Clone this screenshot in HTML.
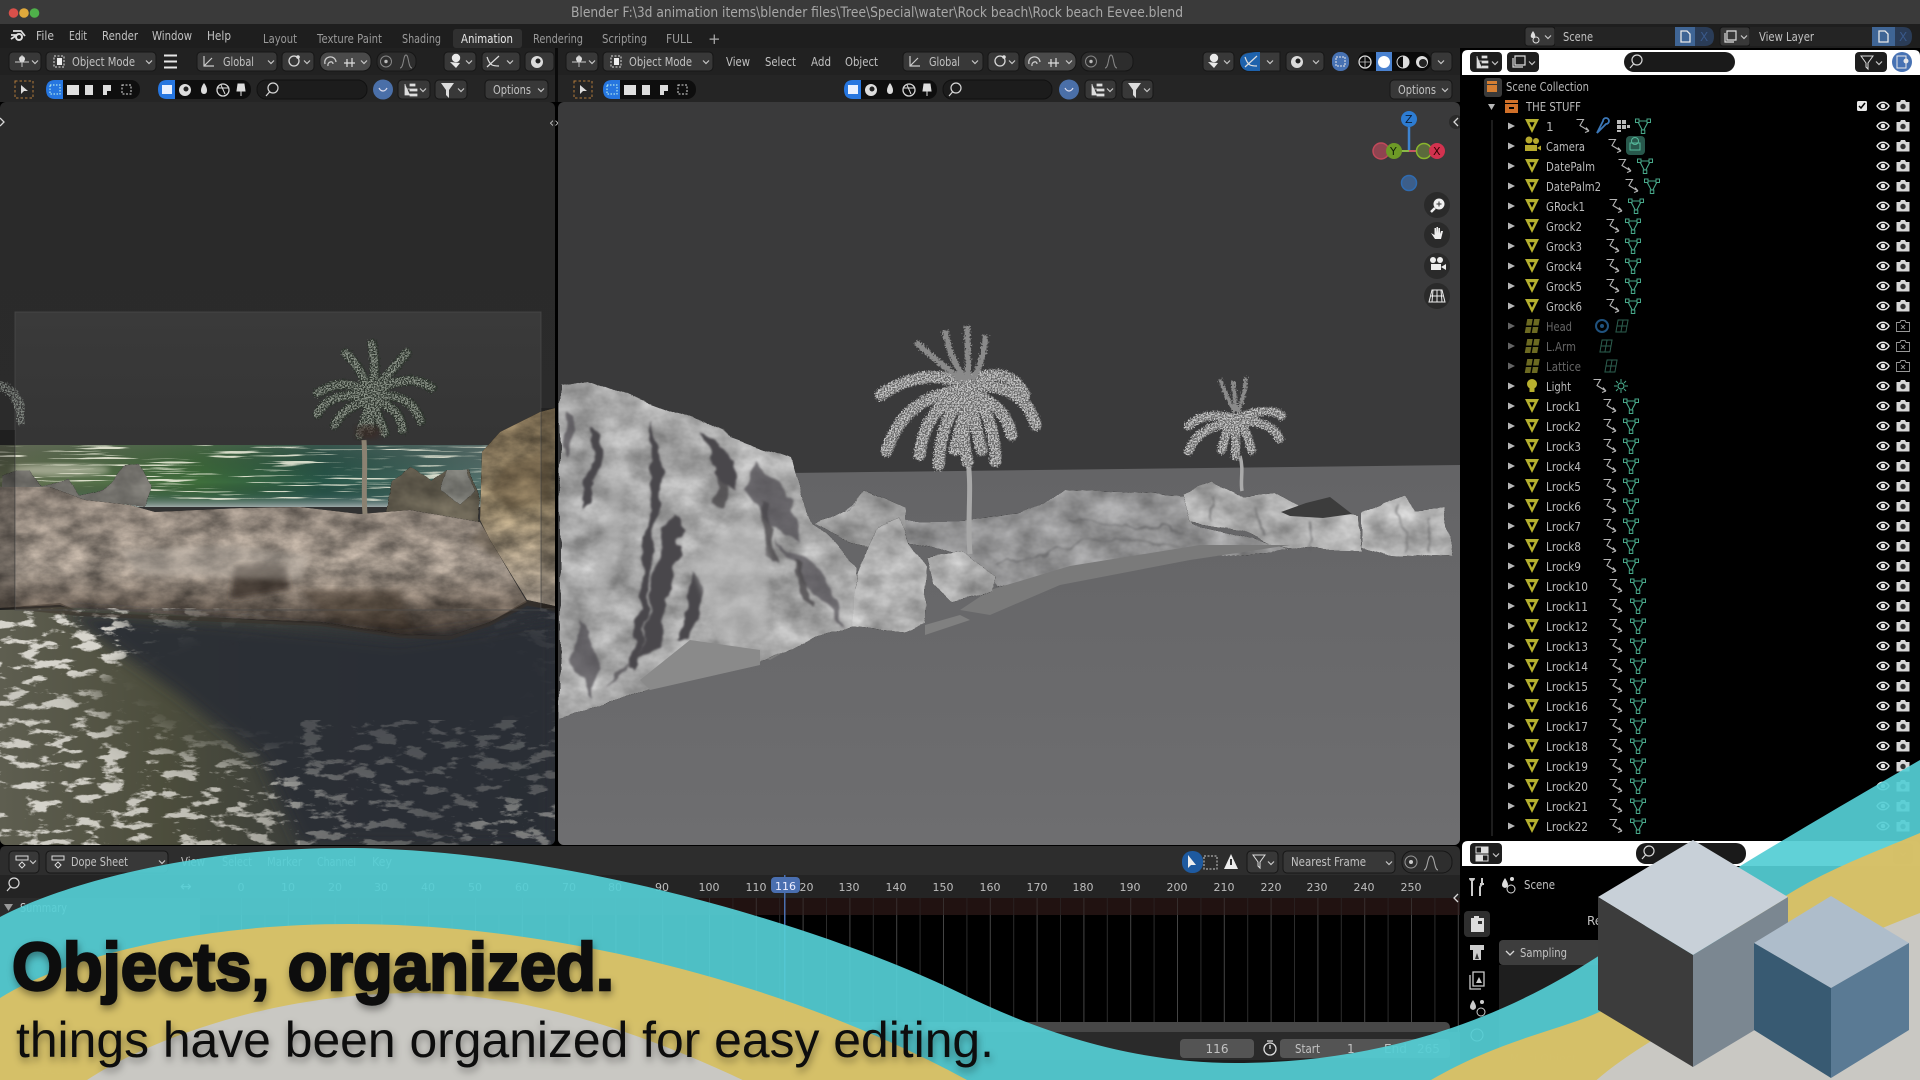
<!DOCTYPE html>
<html><head><meta charset="utf-8"><title>Blender</title>
<style>
html,body{margin:0;padding:0;background:#000;width:1920px;height:1080px;overflow:hidden}
svg{display:block;font-family:"DejaVu Sans","Liberation Sans",sans-serif}
text{font-size:12px;fill:#c2c2c2}
.b{fill:#383838;stroke:#161616;stroke-width:1}
.d{fill:#2c2c2c;stroke:#161616;stroke-width:1}
.r{fill:#bcbcbc;font-size:12px}
.g{fill:#666;font-size:12px}
.i{fill:none;stroke:#d8d8d8;stroke-width:1.3}
.f{font-size:11px;text-anchor:middle;fill:#bebebe}
.lib{font-family:"Liberation Sans",sans-serif}
</style></head><body>
<svg width="1920" height="1080" viewBox="0 0 1920 1080" xmlns="http://www.w3.org/2000/svg">
<defs>
<symbol id="m" overflow="visible"><path d="M-7,-7H7L0,7ZM-2.6,-3.8L0,1.6L2.6,-3.8Z" fill="#b6b12f" fill-rule="evenodd"/></symbol>
<symbol id="a" overflow="visible"><path d="M-4,-3.5L3,0L-4,3.5Z" fill="#b8b8b8"/></symbol>
<symbol id="l" overflow="visible"><path d="M-6.5,-6.5H0.5L-3,-0.5L6,5M6,5L3,1.5M6,5L2,6.5" fill="none" stroke="#b5b5b5" stroke-width="1.1"/></symbol>
<symbol id="d" overflow="visible"><path d="M-5.5,-5L5.5,-5L0,5.5Z" fill="none" stroke="#48a88a" stroke-width="1.1"/><g fill="#000" stroke="#48a88a" stroke-width="1"><rect x="-7.5" y="-7" width="3.5" height="3.5"/><rect x="4" y="-7" width="3.5" height="3.5"/><rect x="-1.7" y="4" width="3.5" height="3.5"/></g></symbol>
<symbol id="e" overflow="visible"><path d="M-6,0C-3,-5 3,-5 6,0C3,5 -3,5 -6,0Z" fill="none" stroke="#e8e8e8" stroke-width="1.4"/><circle r="2.3" fill="#e8e8e8"/></symbol>
<symbol id="c" overflow="visible"><path d="M-6.5,-4H-3L-2,-6H2L3,-4H6.5V5.5H-6.5Z" fill="#d8d8d8"/><circle r="2.7" cy="0.5" fill="#333"/></symbol>
<symbol id="x" overflow="visible"><path d="M-6.5,-3.5H-3L-2,-5.5H2L3,-3.5H6.5V5.5H-6.5Z" fill="none" stroke="#999" stroke-width=".9"/><path d="M-2,-1L2,3M2,-1L-2,3" stroke="#999" stroke-width=".9"/></symbol>
<symbol id="h" overflow="visible"><path d="M-3,-1.5L0,1.5L3,-1.5" fill="none" stroke="#c8c8c8" stroke-width="1.2"/></symbol>
<symbol id="t" overflow="visible"><g fill="#6c6a22" transform="skewX(-10)"><rect x="-6" y="-7" width="5.5" height="6.5"/><rect x="1" y="-7" width="5.5" height="6.5"/><rect x="-6" y="1" width="5.5" height="6"/><rect x="1" y="1" width="5.5" height="6"/></g></symbol>
<symbol id="u" overflow="visible"><g fill="none" stroke="#2d5f50" stroke-width="1" transform="skewX(-10)"><rect x="-5" y="-6" width="10" height="12"/><path d="M-5,0H5M0,-6V6"/></g></symbol>
<symbol id="p" overflow="visible"><circle cx="1" cy="-1" r="5" fill="none" stroke="#d8d8d8" stroke-width="1.2"/><path d="M-6,7L-2.500,3" stroke="#d8d8d8" stroke-width="1.200"/></symbol>
<symbol id="oc" overflow="visible"><circle r="6" fill="#ddd"/><circle r="2.5" fill="#222" cx="1" cy="-1"/></symbol>
<pattern id="vl" x="241" y="0" width="46.8" height="10" patternUnits="userSpaceOnUse"><rect width="1" height="10" fill="#444"/><rect x="23.4" width="1" height="10" fill="#2c2c2c"/></pattern>
<filter id="rock" x="0" y="0" width="100%" height="100%" color-interpolation-filters="sRGB"><feTurbulence type="fractalNoise" baseFrequency=".035 .06" numOctaves="5" seed="8"/><feColorMatrix values=".5 0 0 0 .25 .5 0 0 0 .25 .5 0 0 0 .25 0 0 0 0 1" result="g"/><feComposite in="SourceGraphic" in2="g" operator="arithmetic" k1="2" k2="0" k3="0" k4="0"/></filter>
<filter id="rock2" x="-8%" y="-8%" width="116%" height="116%" color-interpolation-filters="sRGB"><feTurbulence type="fractalNoise" baseFrequency=".02 .03" numOctaves="3" seed="3" result="w"/><feDisplacementMap in="SourceGraphic" in2="w" scale="10" xChannelSelector="R" yChannelSelector="G" result="s"/><feTurbulence type="fractalNoise" baseFrequency=".03 .04" numOctaves="4" seed="6"/><feColorMatrix values=".35 0 0 0 .33 .35 0 0 0 .33 .35 0 0 0 .33 0 0 0 0 1" result="g"/><feComposite in="s" in2="g" operator="arithmetic" k1="2" k2="0" k3="0" k4="0"/></filter>
<filter id="wob" x="-15%" y="-15%" width="130%" height="130%"><feTurbulence type="fractalNoise" baseFrequency=".04" numOctaves="3" seed="9" result="w"/><feDisplacementMap in="SourceGraphic" in2="w" scale="18" xChannelSelector="R" yChannelSelector="G" result="s"/><feGaussianBlur in="s" stdDeviation="1"/></filter>
<filter id="foam" x="0" y="0" width="100%" height="100%" color-interpolation-filters="sRGB"><feTurbulence type="fractalNoise" baseFrequency=".04 .1" numOctaves="5" seed="11"/><feColorMatrix values="0 0 0 0 .84 0 0 0 0 .83 0 0 0 0 .8 9 0 0 0 -4.9"/></filter>
<filter id="spark" x="0" y="0" width="100%" height="100%" color-interpolation-filters="sRGB"><feTurbulence type="fractalNoise" baseFrequency=".015 .45" numOctaves="3" seed="5"/><feColorMatrix values="0 0 0 0 .95 0 0 0 0 .95 0 0 0 0 .88 9 0 0 0 -5.4"/></filter>
<filter id="spk" x="-10%" y="-10%" width="120%" height="120%" color-interpolation-filters="sRGB"><feTurbulence type="fractalNoise" baseFrequency=".7" numOctaves="2" seed="2" result="n0"/><feDisplacementMap in="SourceGraphic" in2="n0" scale="7" xChannelSelector="R" yChannelSelector="G" result="s"/><feColorMatrix in="n0" values="0 0 0 0 0 0 0 0 0 0 0 0 0 0 0 7 0 0 0 -3" result="n"/><feComposite in="s" in2="n" operator="in"/></filter>
<filter id="fuzz" x="-10%" y="-10%" width="120%" height="120%" color-interpolation-filters="sRGB"><feTurbulence type="fractalNoise" baseFrequency=".6" numOctaves="2" seed="4"/><feDisplacementMap in="SourceGraphic" scale="7" xChannelSelector="R" yChannelSelector="G"/></filter>
<filter id="bl"><feGaussianBlur stdDeviation="7"/></filter>
<filter id="bl2"><feGaussianBlur stdDeviation="3"/></filter>
<filter id="bl3"><feGaussianBlur stdDeviation="18"/></filter>
<filter id="sh" x="-5%" y="-20%" width="110%" height="150%"><feDropShadow dx="1" dy="4" stdDeviation="4" flood-color="#000" flood-opacity=".4"/></filter>
<linearGradient id="sky" x1="0" y1="0" x2="0" y2="1"><stop offset="0" stop-color="#3a3a3a"/><stop offset="1" stop-color="#2e2e2e"/></linearGradient>
<linearGradient id="vsky" x1="0" y1="0" x2="0" y2="1"><stop offset="0" stop-color="#2a2a2a"/><stop offset="1" stop-color="#2c2c2c"/></linearGradient>
<linearGradient id="sea" x1="0" y1="0" x2="1" y2="0"><stop offset="0" stop-color="#6b7457"/><stop offset=".4" stop-color="#3f6f3c"/><stop offset=".65" stop-color="#28574a"/><stop offset="1" stop-color="#5a7672"/></linearGradient>
<linearGradient id="seaV" x1="0" y1="0" x2="0" y2="1"><stop offset="0" stop-color="#555" stop-opacity=".35"/><stop offset=".6" stop-color="#000" stop-opacity="0"/><stop offset=".8" stop-color="#2b4a4a" stop-opacity=".3"/><stop offset="1" stop-color="#a2acac" stop-opacity=".95"/></linearGradient>
<linearGradient id="wat" x1="0" y1="0" x2="1" y2="0"><stop offset="0" stop-color="#5e5e50"/><stop offset=".3" stop-color="#4c4d3c"/><stop offset=".6" stop-color="#383b3a"/><stop offset="1" stop-color="#2c2f36"/></linearGradient>
<linearGradient id="rk" x1="0" y1="0" x2="0" y2="1"><stop offset="0" stop-color="#8d8278"/><stop offset=".55" stop-color="#9a8f84"/><stop offset=".8" stop-color="#6b6056"/><stop offset="1" stop-color="#332b25"/></linearGradient>
<linearGradient id="ck" x1="0" y1="0" x2="0" y2="1"><stop offset="0" stop-color="#7a6a50"/><stop offset=".5" stop-color="#8c7d62"/><stop offset="1" stop-color="#a89c8e"/></linearGradient>
<radialGradient id="fm" gradientUnits="userSpaceOnUse" cx="30" cy="810" r="400"><stop offset="0" stop-color="#fff"/><stop offset=".5" stop-color="#ccc"/><stop offset="1" stop-color="#222"/></radialGradient>
<mask id="fmask" maskUnits="userSpaceOnUse" x="0" y="600" width="555" height="245"><rect x="0" y="600" width="555" height="245" fill="url(#fm)"/><ellipse cx="330" cy="680" rx="240" ry="85" fill="#000" filter="url(#bl3)"/><ellipse cx="40" cy="645" rx="95" ry="36" fill="#fff" filter="url(#bl)"/><ellipse cx="520" cy="825" rx="60" ry="26" fill="#aaa" filter="url(#bl)"/><rect x="300" y="720" width="255" height="125" fill="#555" opacity=".6"/></mask>
<linearGradient id="grnd" x1="0" y1="0" x2="0" y2="1"><stop offset="0" stop-color="#646466"/><stop offset="1" stop-color="#6e6e70"/></linearGradient>
<clipPath id="lv"><rect x="0" y="102" width="555" height="743" rx="6"/></clipPath>
<clipPath id="rv"><rect x="558" y="102" width="902" height="743" rx="6"/></clipPath>
<g id="pf" fill="none" stroke-linecap="round">
<path d="M371,395Q345,375 318,393"/><path d="M371,397Q330,390 318,414"/><path d="M371,395Q408,370 432,388"/><path d="M371,397Q410,390 421,421"/><path d="M371,395Q360,365 346,353"/><path d="M371,395Q378,365 372,344"/><path d="M371,395Q392,370 407,353"/><path d="M371,400Q345,405 335,425"/><path d="M371,400Q400,405 403,430"/><path d="M371,400L360,435"/><path d="M372,400L385,433"/><path d="M371,400L371,430"/>
</g>
<g id="p1" fill="none" stroke-linecap="round">
<path d="M968,385Q925,365 881,395"/><path d="M965,390Q905,395 887,451"/><path d="M960,395Q925,410 920,455"/><path d="M958,400Q940,430 939,465"/><path d="M968,395Q960,430 968,462"/><path d="M975,395Q995,420 996,461"/><path d="M975,385Q1025,385 1036,425"/><path d="M972,380Q1010,365 1025,395"/><path d="M975,395Q1005,405 1012,435"/><path d="M968,400L955,450"/><path d="M970,400L982,450"/>
</g>
<g id="p2" fill="none" stroke-linecap="round">
<path d="M1236,419Q1205,410 1189,426"/><path d="M1236,422Q1200,425 1189,451"/><path d="M1236,419Q1270,405 1282,416"/><path d="M1236,421Q1272,420 1280,439"/><path d="M1236,420L1236,456"/><path d="M1230,420L1222,450"/><path d="M1242,420L1252,450"/>
</g>
</defs>

<rect width="1920" height="1080" fill="#000"/>
<rect width="1920" height="24" fill="#3a3a3a"/>
<circle cx="13.5" cy="13" r="4.8" fill="#d8504a"/><circle cx="24" cy="13" r="4.8" fill="#e0a93c"/><circle cx="34.5" cy="13" r="4.8" fill="#4fb04a"/>
<text x="571" y="17" style="font-size:14px;fill:#a8a8a8" textLength="612" lengthAdjust="spacingAndGlyphs">Blender F:\3d animation items\blender files\Tree\Special\water\Rock beach\Rock beach Eevee.blend</text>
<rect y="24" width="1920" height="24" fill="#1e1e1e"/>

<g transform="translate(18,36)"><circle cx="1" cy="1" r="3" fill="none" stroke="#ddd" stroke-width="2"/><path d="M-7,-1H-1L-7,3M-5,-5L3,-5L7,0" fill="none" stroke="#ddd" stroke-width="1.8"/></g>
<text x="36" y="40" textLength="18" lengthAdjust="spacingAndGlyphs">File</text>
<text x="69" y="40" textLength="18" lengthAdjust="spacingAndGlyphs">Edit</text>
<text x="102" y="40" textLength="36" lengthAdjust="spacingAndGlyphs">Render</text>
<text x="152" y="40" textLength="40" lengthAdjust="spacingAndGlyphs">Window</text>
<text x="207" y="40" textLength="24" lengthAdjust="spacingAndGlyphs">Help</text>
<rect x="453" y="29" width="69" height="19" rx="3" fill="#303030"/>
<text x="263" y="43" style="fill:#9a9a9a" textLength="34" lengthAdjust="spacingAndGlyphs">Layout</text>
<text x="317" y="43" style="fill:#9a9a9a" textLength="65" lengthAdjust="spacingAndGlyphs">Texture Paint</text>
<text x="402" y="43" style="fill:#9a9a9a" textLength="39" lengthAdjust="spacingAndGlyphs">Shading</text>
<text x="461" y="43" style="fill:#e8e8e8" textLength="52" lengthAdjust="spacingAndGlyphs">Animation</text>
<text x="533" y="43" style="fill:#9a9a9a" textLength="50" lengthAdjust="spacingAndGlyphs">Rendering</text>
<text x="602" y="43" style="fill:#9a9a9a" textLength="45" lengthAdjust="spacingAndGlyphs">Scripting</text>
<text x="666" y="43" style="fill:#9a9a9a" textLength="26" lengthAdjust="spacingAndGlyphs">FULL</text>
<text x="708" y="44" style="fill:#aaa;font-size:15px">+</text>

<rect x="1525" y="27" width="30" height="19" rx="3" class="b"/>
<path d="M1533,31c-3,4 -3,7 0,7c3,0 3,-3 0,-7z" fill="#ddd"/><circle cx="1536" cy="40" r="3" fill="none" stroke="#ddd"/>
<use href="#h" x="1548" y="37"/>
<rect x="1555" y="27" width="120" height="19" fill="#242424"/>
<text x="1563" y="41" textLength="30" lengthAdjust="spacingAndGlyphs">Scene</text>
<rect x="1675" y="27" width="20" height="19" fill="#3f6595"/>
<path d="M1681,31h6l3,3v8h-9z" fill="none" stroke="#e8e8e8" stroke-width="1.3"/>
<path d="M1695,27h10q9,0 9,9.5q0,9.5 -9,9.5h-10z" fill="#2a3c57"/>
<text x="1700" y="41" style="fill:#39598a">X</text>
<rect x="1720" y="27" width="30" height="19" rx="3" class="b"/>
<path d="M1727,31h9v9h-9zM1725,33v9h9" fill="none" stroke="#ddd" stroke-width="1.2"/>
<use href="#h" x="1744" y="37"/>
<rect x="1750" y="27" width="122" height="19" fill="#242424"/>
<text x="1759" y="41" textLength="55" lengthAdjust="spacingAndGlyphs">View Layer</text>
<rect x="1872" y="27" width="23" height="19" fill="#3f6595"/>
<path d="M1879,31h6l3,3v8h-9z" fill="none" stroke="#e8e8e8" stroke-width="1.3"/>
<path d="M1895,27h8q9,0 9,9.5q0,9.5 -9,9.5h-8z" fill="#2a3c57"/>
<text x="1899" y="41" style="fill:#39598a">X</text>

<rect y="48" width="1460" height="27" fill="#212121"/>
<rect y="75" width="1460" height="27" fill="#252525"/>
<rect x="555" y="48" width="3" height="54" fill="#0b0b0b"/>

<rect x="9" y="52" width="32" height="19" rx="4" class="b"/>
<circle cx="22" cy="59" r="3" fill="#ddd"/><path d="M15,62h14M22,55v12" stroke="#ccc" stroke-width=".9"/><use href="#h" x="35" y="62"/>
<rect x="46" y="52" width="110" height="19" rx="4" class="b"/>
<rect x="54" y="56" width="10" height="11" fill="none" stroke="#ddd" stroke-dasharray="2 1.5"/><rect x="57" y="58" width="5" height="7" fill="#eee"/>
<text x="72" y="66" textLength="63" lengthAdjust="spacingAndGlyphs">Object Mode</text><use href="#h" x="149" y="62"/>
<path d="M164,55.5h13M164,61.5h13M164,67.5h13" stroke="#e6e6e6" stroke-width="2"/>
<rect x="197" y="52" width="80" height="19" rx="4" class="b"/>
<path d="M204,56v10h10M204,66l8,-8" fill="none" stroke="#ccc" stroke-width="1.2"/>
<text x="223" y="66" textLength="31" lengthAdjust="spacingAndGlyphs">Global</text><use href="#h" x="271" y="62"/>
<rect x="282" y="52" width="32" height="19" rx="4" class="b"/>
<circle cx="294" cy="61" r="5" class="i"/><circle cx="298" cy="57" r="1.8" fill="#ddd"/><use href="#h" x="307" y="62"/>
<rect x="320" y="52" width="51" height="19" rx="8" fill="#4a4a4a" stroke="#161616"/>
<path d="M325,64c-2,-8 10,-10 11,-2M328,66c-1,-4 5,-6 5,-2" fill="none" stroke="#ccc" stroke-width="1.3"/>
<path d="M344,63h11M347,59v8M352,58v9" stroke="#ddd" stroke-width="1.2"/><use href="#h" x="364" y="62"/>
<rect x="377" y="52" width="39" height="19" rx="8" fill="#2d2d2d" stroke="#161616"/>
<circle cx="386" cy="61.5" r="5.5" fill="none" stroke="#888"/><circle cx="386" cy="61.5" r="1.7" fill="#bbb"/>
<path d="M400,68c4,0 3,-13 6,-13c3,0 2,13 6,13" fill="none" stroke="#888"/>
<rect x="444" y="52" width="32" height="19" rx="4" class="b"/><circle cx="456" cy="58" r="4.2" fill="#e8e8e8"/><path d="M450,62l6,6l4,-5z" fill="#e8e8e8"/><use href="#h" x="469" y="62"/>
<rect x="482" y="52" width="38" height="19" rx="4" class="b"/><path d="M487,67l12,-11M487,57c3,9 6,9 12,9" fill="none" stroke="#ddd" stroke-width="1.2"/><use href="#h" x="510" y="62"/>
<rect x="525" y="52" width="29" height="19" rx="4" class="b"/><use href="#oc" x="537" y="62"/>

<rect x="566" y="52" width="32" height="19" rx="4" class="b"/>
<circle cx="579" cy="59" r="3" fill="#ddd"/><path d="M572,62h14M579,55v12" stroke="#ccc" stroke-width=".9"/><use href="#h" x="592" y="62"/>
<rect x="603" y="52" width="110" height="19" rx="4" class="b"/>
<rect x="611" y="56" width="10" height="11" fill="none" stroke="#ddd" stroke-dasharray="2 1.5"/><rect x="614" y="58" width="5" height="7" fill="#eee"/>
<text x="629" y="66" textLength="63" lengthAdjust="spacingAndGlyphs">Object Mode</text><use href="#h" x="706" y="62"/>
<text x="726" y="66" textLength="24" lengthAdjust="spacingAndGlyphs">View</text>
<text x="765" y="66" textLength="31" lengthAdjust="spacingAndGlyphs">Select</text>
<text x="811" y="66" textLength="20" lengthAdjust="spacingAndGlyphs">Add</text>
<text x="845" y="66" textLength="33" lengthAdjust="spacingAndGlyphs">Object</text>
<rect x="903" y="52" width="80" height="19" rx="4" class="b"/>
<path d="M910,56v10h10M910,66l8,-8" fill="none" stroke="#ccc" stroke-width="1.2"/>
<text x="929" y="66" textLength="31" lengthAdjust="spacingAndGlyphs">Global</text><use href="#h" x="975" y="62"/>
<rect x="988" y="52" width="31" height="19" rx="4" class="b"/><circle cx="1000" cy="61" r="5" class="i"/><circle cx="1004" cy="57" r="1.8" fill="#ddd"/><use href="#h" x="1012" y="62"/>
<rect x="1024" y="52" width="52" height="19" rx="8" fill="#4a4a4a" stroke="#161616"/>
<path d="M1029,64c-2,-8 10,-10 11,-2M1032,66c-1,-4 5,-6 5,-2" fill="none" stroke="#ccc" stroke-width="1.3"/>
<path d="M1048,63h11M1051,59v8M1056,58v9" stroke="#ddd" stroke-width="1.2"/><use href="#h" x="1069" y="62"/>
<rect x="1081" y="52" width="52" height="19" rx="8" fill="#2d2d2d" stroke="#161616"/>
<circle cx="1091" cy="61.5" r="5.5" fill="none" stroke="#888"/><circle cx="1091" cy="61.5" r="1.7" fill="#bbb"/>
<path d="M1105,68c4,0 3,-13 6,-13c3,0 2,13 6,13" fill="none" stroke="#888"/>
<rect x="1203" y="52" width="31" height="19" rx="4" class="b"/><circle cx="1214" cy="58" r="4.2" fill="#e8e8e8"/><path d="M1208,62l6,6l4,-5z" fill="#e8e8e8"/><use href="#h" x="1227" y="62"/>
<path d="M1249,52h31v19h-31q-9,0 -9,-9.5q0,-9.5 9,-9.5z" fill="#3a3a3a" stroke="#161616"/><path d="M1240,61c0,-5 4,-9 20,-9v19h-11c-5,0 -9,-4 -9,-10z" fill="#1e62ac"/>
<path d="M1245,67l12,-11M1245,57c3,9 6,9 12,9" fill="none" stroke="#ddd" stroke-width="1.2"/><use href="#h" x="1270" y="62"/>
<rect x="1286" y="52" width="38" height="19" rx="4" class="b"/><use href="#oc" x="1297" y="62"/><use href="#h" x="1316" y="62"/>
<rect x="1332" y="52" width="17" height="19" rx="8" fill="#4772b3"/><rect x="1336" y="57" width="9" height="9" fill="none" stroke="#e8e8e8" stroke-dasharray="2 1"/>
<rect x="1358" y="52" width="73" height="19" rx="9" fill="#0a0a0a"/><rect x="1376" y="52" width="16" height="19" fill="#4a82d0"/>
<circle cx="1365" cy="62" r="6" class="i"/><path d="M1359,62h12M1365,56v12" stroke="#ccc" stroke-width=".8"/>
<circle cx="1384" cy="62" r="6" fill="#fff"/>
<circle cx="1403" cy="62" r="6" fill="none" stroke="#ddd"/><path d="M1403,56a6,6 0 0 1 0,12z" fill="#ddd"/>
<circle cx="1422" cy="62" r="6" fill="#ddd"/><circle cx="1423" cy="63" r="4" fill="#222"/>
<rect x="1431" y="52" width="21" height="19" rx="4" class="b"/><use href="#h" x="1441" y="62"/>

<rect x="15" y="81" width="18" height="17" fill="none" stroke="#b27b3a" stroke-dasharray="2.5 2"/><path d="M21,85l0,9l3,-3h4z" fill="#ddd"/>
<rect x="46" y="80" width="94" height="19" rx="9" fill="#0e0e0e"/><path d="M55,80h8v19h-8q-9,0 -9,-9.5q0,-9.5 9,-9.5z" fill="#2676e0"/>
<rect x="50" y="85" width="10" height="9" fill="none" stroke="#cfe" stroke-dasharray="1.5 1.5"/>
<path d="M67,85h12v10h-12z" fill="#e0e0e0"/><path d="M85,85h8v10h-8z" fill="#ddd"/><path d="M103,85h8v6h-4v4h-4z" fill="#ddd"/><rect x="122" y="85" width="9" height="9" fill="none" stroke="#ddd" stroke-dasharray="2 1.5"/>
<rect x="158" y="80" width="93" height="19" rx="9" fill="#0e0e0e"/><path d="M167,80h8v19h-8q-9,0 -9,-9.5q0,-9.5 9,-9.5z" fill="#2676e0"/><rect x="162" y="85" width="10" height="9" fill="#e8f0ff"/>
<use href="#oc" x="185" y="90"/><path d="M204,83c-4,5 -4,11 0,11c4,0 4,-6 0,-11z" fill="#ddd"/><circle cx="223" cy="90" r="6" class="i"/><path d="M218,88h10M221,85l4,9" stroke="#ddd"/><path d="M238,84h6l1,7h-8z M241,91v5" fill="#ddd" stroke="#ddd"/>
<rect x="257" y="80" width="110" height="19" rx="9" fill="#1c1c1c" stroke="#111"/><use href="#p" x="272" y="89"/>
<circle cx="383" cy="89.5" r="10" fill="#4a6fa8"/><path d="M379,88c2,4 6,4 8,0" fill="none" stroke="#dde" stroke-width="1.2"/>
<rect x="398" y="80" width="32" height="19" rx="4" class="b"/><path d="M405,84v11h5M405,89h5M410,84h5v2h-5zM410,89h7v2h-7zM410,94h7v2h-7z" fill="#ddd" stroke="#ddd" stroke-width=".8"/><use href="#h" x="423" y="90"/>
<rect x="435" y="80" width="32" height="19" rx="4" class="b"/><path d="M441,83h13l-5,7v8l-3,-3v-5z" fill="#ddd"/><use href="#h" x="461" y="90"/>
<rect x="485" y="80" width="63" height="19" rx="4" class="b"/><text x="493" y="94" textLength="38" lengthAdjust="spacingAndGlyphs">Options</text><use href="#h" x="541" y="90"/>

<rect x="574" y="81" width="18" height="17" fill="none" stroke="#b27b3a" stroke-dasharray="2.5 2"/><path d="M580,85l0,9l3,-3h4z" fill="#ddd"/>
<rect x="603" y="80" width="93" height="19" rx="9" fill="#0e0e0e"/><path d="M612,80h8v19h-8q-9,0 -9,-9.5q0,-9.5 9,-9.5z" fill="#2676e0"/>
<rect x="607" y="85" width="10" height="9" fill="none" stroke="#cfe" stroke-dasharray="1.5 1.5"/>
<path d="M624,85h12v10h-12z" fill="#e0e0e0"/><path d="M642,85h8v10h-8z" fill="#ddd"/><path d="M660,85h8v6h-4v4h-4z" fill="#ddd"/><rect x="678" y="85" width="9" height="9" fill="none" stroke="#ddd" stroke-dasharray="2 1.5"/>
<rect x="844" y="80" width="93" height="19" rx="9" fill="#0e0e0e"/><path d="M853,80h8v19h-8q-9,0 -9,-9.5q0,-9.5 9,-9.5z" fill="#2676e0"/><rect x="848" y="85" width="10" height="9" fill="#e8f0ff"/>
<use href="#oc" x="871" y="90"/><path d="M890,83c-4,5 -4,11 0,11c4,0 4,-6 0,-11z" fill="#ddd"/><circle cx="909" cy="90" r="6" class="i"/><path d="M904,88h10M907,85l4,9" stroke="#ddd"/><path d="M924,84h6l1,7h-8z M927,91v5" fill="#ddd" stroke="#ddd"/>
<rect x="943" y="80" width="109" height="19" rx="9" fill="#1c1c1c" stroke="#111"/><use href="#p" x="955" y="89"/>
<circle cx="1069" cy="89.5" r="10" fill="#4a6fa8"/><path d="M1065,88c2,4 6,4 8,0" fill="none" stroke="#dde" stroke-width="1.2"/>
<rect x="1085" y="80" width="31" height="19" rx="4" class="b"/><path d="M1092,84v11h5M1092,89h5M1097,84h5v2h-5zM1097,89h7v2h-7zM1097,94h7v2h-7z" fill="#ddd" stroke="#ddd" stroke-width=".8"/><use href="#h" x="1110" y="90"/>
<rect x="1122" y="80" width="31" height="19" rx="4" class="b"/><path d="M1128,83h13l-5,7v8l-3,-3v-5z" fill="#ddd"/><use href="#h" x="1147" y="90"/>
<rect x="1390" y="80" width="62" height="19" rx="4" class="b"/><text x="1398" y="94" textLength="38" lengthAdjust="spacingAndGlyphs">Options</text><use href="#h" x="1445" y="90"/>

<!-- LEFT VIEWPORT -->
<g clip-path="url(#lv)">
<rect x="0" y="102" width="555" height="743" fill="url(#vsky)"/>
<rect x="15" y="312" width="526" height="300" fill="url(#sky)"/>
<rect x="0" y="445" width="500" height="62" fill="url(#sea)"/>
<rect x="0" y="445" width="500" height="62" fill="url(#seaV)"/>
<rect x="0" y="445" width="500" height="56" filter="url(#spark)" opacity=".85"/>
<ellipse cx="60" cy="470" rx="50" ry="6" fill="#e6e2d0" opacity=".5" filter="url(#bl2)"/>
<path d="M0,487V476L18,468H30L42,485L70,476L80,495L105,490L122,466L138,464L150,490L146,505H0Z" fill="#6f6d68" filter="url(#rock2)"/>
<path d="M385,520L392,480L412,468L432,482L448,470L470,470L480,500L478,525Z" fill="#625c4e" filter="url(#rock2)"/>
<path d="M440,490L448,470L468,470L474,490L460,505Z" fill="#7e7e78" filter="url(#rock2)"/>
<path d="M0,487L50,487L85,500L130,505L155,512L240,508L300,507L360,514L410,510L480,522L505,565L527,602L490,622L450,636L400,634L320,622L220,618L80,612L60,605L0,608Z" fill="url(#rk)" filter="url(#rock)"/>
<path d="M235,565h50l5,25l-60,10z" fill="#2c241c" opacity=".7" filter="url(#bl2)"/>
<path d="M120,550L230,545L310,555L300,580L140,575Z" fill="#b2aaa1" opacity=".45" filter="url(#bl2)"/>
<path d="M300,590L400,590L410,630L330,620Z" fill="#3c3028" opacity=".45" filter="url(#bl2)"/>
<path d="M470,540L490,520L510,535L500,560Z" fill="#5a5040" opacity=".5" filter="url(#bl2)"/>
<path d="M480,520L482,452L500,432L540,412L555,408V606L527,600L490,540Z" fill="url(#ck)" filter="url(#rock)"/>
<path d="M490,490L505,465L550,450V500L510,510Z" fill="#5e4f38" opacity=".4" filter="url(#bl2)"/>
<path d="M0,610L60,607L220,618L320,624L400,636L450,636L490,624L527,604L555,612V845H0Z" fill="url(#wat)"/>
<path d="M62,612L220,622L400,640L490,628L555,616V845H300L262,760L180,695Z" fill="#2a2e35" opacity=".92" filter="url(#bl)"/>
<rect x="0" y="608" width="555" height="237" filter="url(#foam)" mask="url(#fmask)"/>
<path d="M0,608L60,603L80,612L220,618L320,622L400,634L450,636L490,622L527,600L555,606V610L527,606L490,626L450,640L400,638L320,626L220,622L80,616Z" fill="#3a3028" opacity=".5"/>
<rect x="15" y="312" width="526" height="298" fill="none" stroke="#4c4c4c" stroke-opacity=".7"/>
<rect x="0" y="430" width="15" height="180" fill="#000" opacity=".28"/><rect x="541" y="408" width="14" height="200" fill="#000" opacity=".2"/>
<path d="M364,440C366,470 363,490 365,514" stroke="#8b8272" stroke-width="5" fill="none"/>
<use href="#pf" stroke="#2c332c" stroke-width="10" filter="url(#fuzz)"/>
<use href="#pf" stroke="#aeb6aa" stroke-width="8" filter="url(#spk)" opacity=".75"/>
<ellipse cx="368" cy="432" rx="13" ry="7" fill="#3a2c26" opacity=".7" filter="url(#bl2)"/>
<path d="M0,385Q24,395 22,425" fill="none" stroke="#a0a8a0" stroke-width="10" filter="url(#spk)" opacity=".7"/>
</g>
<path d="M0,118l4,4l-4,4" class="i" stroke-width="1"/>
<text x="549" y="127" style="fill:#bbb;font-size:13px">‹›</text>

<!-- RIGHT VIEWPORT -->
<g clip-path="url(#rv)">
<rect x="558" y="102" width="902" height="743" fill="#3a3a3b"/>
<path d="M790,473L1460,465V845H558V700Z" fill="url(#grnd)"/>
<path d="M815,525L845,512L866,490L900,506L905,520L960,520L1020,515L1045,503L1065,488L1185,495L1192,524L1271,542L1290,548L1228,555L1065,574L995,588L970,558L932,545Z" fill="#929293" filter="url(#rock2)"/>
<path d="M1183,493L1212,481L1243,497L1275,493L1300,507L1358,518L1361,551L1323,551L1277,545L1243,530L1190,521Z" fill="#a8a8a8" filter="url(#rock2)"/>
<path d="M1361,514L1404,495L1415,510L1444,507L1453,558L1388,555L1361,547Z" fill="#b6b6b6" filter="url(#rock2)"/>
<g fill="none" stroke="#5e5e60" stroke-width="1.500" filter="url(#wob)" opacity=".7"><path d="M1065,520L1185,530"/><path d="M1000,560L1110,540L1190,545"/><path d="M1210,495L1215,520M1260,505L1262,535M1310,520L1315,548"/><path d="M1400,505L1405,550M1430,515L1428,552"/></g>
<path d="M1281,512L1306,503L1330,497L1352,514L1323,518L1290,516Z" fill="#3c3c3c"/>
<path d="M990,590L1070,566L1200,545L1290,545L1190,560L1060,585L990,615L960,610Z" fill="#7a7a7a"/>
<path d="M748,650L840,620L805,640L770,660Z" fill="#7c7c7c"/>
<path d="M925,625L960,615L970,620L925,635Z" fill="#808080"/>
<path d="M560,384L586,379L646,402L703,423L732,437L790,458L801,496L813,525L858,567L853,626L807,640L767,661L635,693L560,717Z" fill="#a4a4a4" filter="url(#rock2)"/>
<g fill="#4a474b" filter="url(#wob)">
<path d="M650,420L665,475L655,530L640,660L628,670L645,560L652,480Z"/>
<path d="M672,510L682,530L670,590L660,650L640,660L652,580Z"/>
<path d="M690,570L705,590L690,640L676,640Z"/>
<path d="M595,430L605,440L590,500L582,505Z"/>
<path d="M700,430L730,455L735,490L715,470Z"/>
<path d="M755,460L795,500L800,540L775,530L745,490Z" opacity=".7"/>
<path d="M775,540L830,580L845,625L810,590Z" opacity=".65"/>
<path d="M585,620L600,660L590,700L570,660Z" opacity=".7"/>
<path d="M565,410L575,415L572,450L563,460Z" opacity=".7"/>
<path d="M720,470L730,480L725,510L715,505Z" opacity=".8"/>
<path d="M758,500L768,505L775,560L765,555Z" opacity=".8"/>
<path d="M790,560L800,565L815,610L803,600Z" opacity=".8"/>
<path d="M620,670L632,660L610,690Z" opacity=".7"/>
</g>
<path d="M612,480L625,475L620,550L600,610L590,610Z" fill="#c0c0c0" opacity=".45" filter="url(#bl2)"/>
<path d="M716,540L752,510L770,560L765,640L720,640L690,560Z" fill="#b8b8b8" opacity=".55" filter="url(#bl2)"/>
<path d="M640,680L690,640L760,650L760,665L650,690Z" fill="#8a8a8a"/>
<path d="M815,525L850,510L865,490L905,508L905,530L870,545L840,540Z" fill="#9a9a9a" filter="url(#rock2)"/>
<path d="M853,626L853,590L870,546L879,528L899,519L910,542L928,567L925,623L905,632Z" fill="#aeaeae" filter="url(#rock2)"/>
<path d="M928,556L962,551L993,578L991,592L951,602L934,585Z" fill="#a8a8a8" filter="url(#rock2)"/>
<path d="M968,461C972,490 967,520 970,554" stroke="#a8a8a8" stroke-width="5" fill="none"/>
<use href="#p1" stroke="#6a6a6a" stroke-width="11" filter="url(#fuzz)" opacity=".9"/>
<use href="#p1" stroke="#c8c8c8" stroke-width="12" filter="url(#spk)"/>
<g fill="none" stroke="#8a8a8a" stroke-width="6" filter="url(#fuzz)">
<path d="M962,380Q935,360 916,342"/><path d="M966,380Q950,360 945,330"/><path d="M968,380Q968,350 967,326"/><path d="M972,380Q985,360 985,335"/>
</g>
<path d="M1240,456C1244,470 1240,480 1242,491" stroke="#aaa" stroke-width="3.5" fill="none"/>
<use href="#p2" stroke="#6a6a6a" stroke-width="8" filter="url(#fuzz)" opacity=".9"/>
<use href="#p2" stroke="#c8c8c8" stroke-width="9" filter="url(#spk)"/>
<g fill="none" stroke="#8a8a8a" stroke-width="4" filter="url(#fuzz)"><path d="M1235,412Q1225,395 1220,379"/><path d="M1238,412Q1245,395 1246,377"/><path d="M1236,412L1233,381"/></g>
<path d="M1409,151V127" stroke="#3e84d0" stroke-width="2.5"/><path d="M1396,151H1409" stroke="#8ab848" stroke-width="2"/><path d="M1409,151H1430" stroke="#c85464" stroke-width="2"/>
<circle cx="1381" cy="151" r="8" fill="#8f4450" stroke="#c2495a" stroke-width="1.5"/>
<circle cx="1394" cy="151" r="8" fill="#6d9a26"/><text x="1390" y="155" style="font-size:11px;fill:#10200a">Y</text>
<circle cx="1424" cy="151" r="7.5" fill="#5b6a3c" stroke="#8ab62c" stroke-width="1.5"/>
<circle cx="1437" cy="151" r="8" fill="#d2324f"/><text x="1433" y="155" style="font-size:11px;fill:#300">X</text>
<circle cx="1409" cy="119" r="8" fill="#2d7cd2"/><text x="1405" y="123" style="font-size:11px;fill:#0a1d36">Z</text>
<circle cx="1409" cy="183" r="7.5" fill="#3c5e8a" stroke="#2f6bb0" stroke-width="1.5"/>
<circle cx="1437" cy="205" r="13" fill="#2a2a2a"/><circle cx="1439" cy="204" r="5.5" fill="#eee"/><path d="M1431,212l4,-4" stroke="#eee" stroke-width="2.5"/><path d="M1436.5,204h5M1439,201.500v5" stroke="#333"/>
<circle cx="1437" cy="235" r="13" fill="#2a2a2a"/><path d="M1431,233l4,6h6l2,-8h-2l-1,3v-6h-1.500l-.5,5v-6h-1.500l-.5,6v-5h-1.500v7z" fill="#eee"/>
<circle cx="1437" cy="266" r="13" fill="#2a2a2a"/><circle cx="1433" cy="260" r="3" fill="#eee"/><circle cx="1440" cy="260" r="3" fill="#eee"/><path d="M1431,264h10v6h-10zM1441,267l5,-3v6z" fill="#eee"/>
<circle cx="1437" cy="296" r="13" fill="#2a2a2a"/><path d="M1432,290h10l3,12h-16zM1437,290v12M1431,296h12M1441,290l1,12M1433,290l-1,12" fill="none" stroke="#eee"/>
<circle cx="1456" cy="122" r="7" fill="#2a2a2a"/><path d="M1458,118l-4,4l4,4" class="i" stroke-width="1"/>
</g>

<!-- OUTLINER -->
<path d="M1462,75V56q0,-6 6,-6h446q6,0 6,6v19Z" fill="#fff"/>
<rect x="1470" y="52" width="32" height="20" rx="4" fill="#1e1e1e"/><path d="M1477,56v12h5M1477,61h5M1482,56h5v2h-5zM1482,61h6v2h-6zM1482,66h6v2h-6z" fill="#ddd" stroke="#ddd" stroke-width=".7"/><use href="#h" x="1495" y="63"/>
<rect x="1507" y="52" width="32" height="20" rx="4" fill="#1e1e1e"/><path d="M1515,56h10v9h-10zM1513,58v9h10" fill="none" stroke="#ddd" stroke-width="1.2"/><use href="#h" x="1532" y="63"/>
<rect x="1624" y="52" width="111" height="20" rx="10" fill="#1a1a1a"/><use href="#p" x="1636" y="61"/>
<rect x="1855" y="52" width="32" height="20" rx="4" fill="#1e1e1e"/><path d="M1861,56h12l-5,7v6l-2,-2v-4z" fill="none" stroke="#ddd"/><use href="#h" x="1879" y="63"/>
<circle cx="1902" cy="62" r="10" fill="#4772b3"/><rect x="1897" y="56" width="9" height="12" fill="none" stroke="#e8e8e8"/><circle cx="1906" cy="61" r="2.500" fill="#e8e8e8"/>

<rect x="1484" y="78" width="18" height="19" rx="3" fill="#3a3a3a"/><path d="M1487,81h10v3h-10zM1487,85h10v7h-10z" fill="#d67f33"/>
<text x="1506" y="91" style="font-size:12px;fill:#b8b8b8" textLength="83" lengthAdjust="spacingAndGlyphs">Scene Collection</text>
<path d="M1488,104h7l-3.500,6z" fill="#b8b8b8"/>
<path d="M1505,100h13v3h-13zM1505,104h13v9h-13z" fill="#d07029"/><rect x="1509" y="107" width="5" height="2" fill="#000"/>
<text x="1526" y="111" class="r" textLength="55" lengthAdjust="spacingAndGlyphs">THE STUFF</text>
<rect x="1857" y="101" width="10" height="10" rx="1.500" fill="#e8e8e8"/><path d="M1859,106l2,2l4,-5" stroke="#000" stroke-width="1.5" fill="none"/>
<use href="#e" x="1883" y="106"/><use href="#c" x="1903" y="106"/>
<rect x="1491.500" y="120" width="1" height="716" fill="#3a3a3a"/>

<g id="rows">
<use href="#a" x="1512" y="126"/><use href="#m" x="1532" y="126"/><text x="1546" y="131" class="r">1</text><use href="#l" x="1583" y="126"/><path d="M1597,133l9,-9a3,3 0 1 0 -3,-3z" fill="none" stroke="#3c78b8" stroke-width="1.8"/><g fill="#bbb"><rect x="1617" y="120" width="4" height="4"/><rect x="1622" y="120" width="4" height="4"/><rect x="1617" y="125" width="4" height="4"/><rect x="1622" y="125" width="4" height="4"/><rect x="1617" y="130" width="4" height="2"/><rect x="1627" y="125" width="3" height="3"/></g><use href="#d" x="1643" y="126"/><use href="#e" x="1883" y="126"/><use href="#c" x="1903" y="126"/>
<use href="#a" x="1512" y="146"/><g fill="#b6a92c"><circle cx="1529" cy="140" r="3.500"/><circle cx="1536" cy="141" r="3"/><path d="M1525,145h12v6h-12zM1537,148l4,-2.500v5z"/></g><text x="1546" y="151" class="r" textLength="39" lengthAdjust="spacingAndGlyphs">Camera</text><use href="#l" x="1615" y="146"/><rect x="1626" y="136" width="19" height="19" rx="4" fill="#28584c"/><rect x="1630" y="143" width="10" height="7" fill="none" stroke="#55b89a"/><circle cx="1635" cy="141" r="3.500" fill="none" stroke="#55b89a"/><use href="#e" x="1883" y="146"/><use href="#c" x="1903" y="146"/>
<use href="#a" x="1512" y="166"/><use href="#m" x="1532" y="166"/><text x="1546" y="171" class="r" textLength="49" lengthAdjust="spacingAndGlyphs">DatePalm</text><use href="#l" x="1625" y="166"/><use href="#d" x="1645" y="166"/><use href="#e" x="1883" y="166"/><use href="#c" x="1903" y="166"/>
<use href="#a" x="1512" y="186"/><use href="#m" x="1532" y="186"/><text x="1546" y="191" class="r" textLength="55" lengthAdjust="spacingAndGlyphs">DatePalm2</text><use href="#l" x="1632" y="186"/><use href="#d" x="1652" y="186"/><use href="#e" x="1883" y="186"/><use href="#c" x="1903" y="186"/>
<use href="#a" x="1512" y="206"/><use href="#m" x="1532" y="206"/><text x="1546" y="211" class="r" textLength="39" lengthAdjust="spacingAndGlyphs">GRock1</text><use href="#l" x="1616" y="206"/><use href="#d" x="1636" y="206"/><use href="#e" x="1883" y="206"/><use href="#c" x="1903" y="206"/>
<use href="#a" x="1512" y="226"/><use href="#m" x="1532" y="226"/><text x="1546" y="231" class="r" textLength="36" lengthAdjust="spacingAndGlyphs">Grock2</text><use href="#l" x="1613" y="226"/><use href="#d" x="1633" y="226"/><use href="#e" x="1883" y="226"/><use href="#c" x="1903" y="226"/>
<use href="#a" x="1512" y="246"/><use href="#m" x="1532" y="246"/><text x="1546" y="251" class="r" textLength="36" lengthAdjust="spacingAndGlyphs">Grock3</text><use href="#l" x="1613" y="246"/><use href="#d" x="1633" y="246"/><use href="#e" x="1883" y="246"/><use href="#c" x="1903" y="246"/>
<use href="#a" x="1512" y="266"/><use href="#m" x="1532" y="266"/><text x="1546" y="271" class="r" textLength="36" lengthAdjust="spacingAndGlyphs">Grock4</text><use href="#l" x="1613" y="266"/><use href="#d" x="1633" y="266"/><use href="#e" x="1883" y="266"/><use href="#c" x="1903" y="266"/>
<use href="#a" x="1512" y="286"/><use href="#m" x="1532" y="286"/><text x="1546" y="291" class="r" textLength="36" lengthAdjust="spacingAndGlyphs">Grock5</text><use href="#l" x="1613" y="286"/><use href="#d" x="1633" y="286"/><use href="#e" x="1883" y="286"/><use href="#c" x="1903" y="286"/>
<use href="#a" x="1512" y="306"/><use href="#m" x="1532" y="306"/><text x="1546" y="311" class="r" textLength="36" lengthAdjust="spacingAndGlyphs">Grock6</text><use href="#l" x="1613" y="306"/><use href="#d" x="1633" y="306"/><use href="#e" x="1883" y="306"/><use href="#c" x="1903" y="306"/>
<g opacity=".55"><use href="#a" x="1512" y="326"/></g><use href="#t" x="1532" y="326"/><text x="1546" y="331" class="g" textLength="26" lengthAdjust="spacingAndGlyphs">Head</text><circle cx="1602" cy="326" r="6" fill="none" stroke="#20527e" stroke-width="2"/><circle cx="1602" cy="326" r="2" fill="#20527e"/><use href="#u" x="1622" y="326"/><use href="#e" x="1883" y="326"/><use href="#x" x="1903" y="326"/>
<g opacity=".55"><use href="#a" x="1512" y="346"/></g><use href="#t" x="1532" y="346"/><text x="1546" y="351" class="g" textLength="30" lengthAdjust="spacingAndGlyphs">L.Arm</text><use href="#u" x="1606" y="346"/><use href="#e" x="1883" y="346"/><use href="#x" x="1903" y="346"/>
<g opacity=".55"><use href="#a" x="1512" y="366"/></g><use href="#t" x="1532" y="366"/><text x="1546" y="371" class="g" textLength="35" lengthAdjust="spacingAndGlyphs">Lattice</text><use href="#u" x="1611" y="366"/><use href="#e" x="1883" y="366"/><use href="#x" x="1903" y="366"/>
<use href="#a" x="1512" y="386"/><circle cx="1532" cy="384" r="5" fill="#b8b02e"/><rect x="1529.500" y="388" width="5" height="4" fill="#b8b02e"/><text x="1546" y="391" class="r" textLength="25" lengthAdjust="spacingAndGlyphs">Light</text><use href="#l" x="1600" y="386"/><circle cx="1621" cy="386" r="3" fill="none" stroke="#48a88a" stroke-width="1.2"/><path d="M1621,379v3M1621,390v3M1614,386h3M1625,386h3M1616,381l2,2M1624,389l2,2M1626,381l-2,2M1618,389l-2,2" stroke="#48a88a"/><use href="#e" x="1883" y="386"/><use href="#c" x="1903" y="386"/>
<use href="#a" x="1512" y="406"/><use href="#m" x="1532" y="406"/><text x="1546" y="411" class="r" textLength="35" lengthAdjust="spacingAndGlyphs">Lrock1</text><use href="#l" x="1610" y="406"/><use href="#d" x="1631" y="406"/><use href="#e" x="1883" y="406"/><use href="#c" x="1903" y="406"/>
<use href="#a" x="1512" y="426"/><use href="#m" x="1532" y="426"/><text x="1546" y="431" class="r" textLength="35" lengthAdjust="spacingAndGlyphs">Lrock2</text><use href="#l" x="1610" y="426"/><use href="#d" x="1631" y="426"/><use href="#e" x="1883" y="426"/><use href="#c" x="1903" y="426"/>
<use href="#a" x="1512" y="446"/><use href="#m" x="1532" y="446"/><text x="1546" y="451" class="r" textLength="35" lengthAdjust="spacingAndGlyphs">Lrock3</text><use href="#l" x="1610" y="446"/><use href="#d" x="1631" y="446"/><use href="#e" x="1883" y="446"/><use href="#c" x="1903" y="446"/>
<use href="#a" x="1512" y="466"/><use href="#m" x="1532" y="466"/><text x="1546" y="471" class="r" textLength="35" lengthAdjust="spacingAndGlyphs">Lrock4</text><use href="#l" x="1610" y="466"/><use href="#d" x="1631" y="466"/><use href="#e" x="1883" y="466"/><use href="#c" x="1903" y="466"/>
<use href="#a" x="1512" y="486"/><use href="#m" x="1532" y="486"/><text x="1546" y="491" class="r" textLength="35" lengthAdjust="spacingAndGlyphs">Lrock5</text><use href="#l" x="1610" y="486"/><use href="#d" x="1631" y="486"/><use href="#e" x="1883" y="486"/><use href="#c" x="1903" y="486"/>
<use href="#a" x="1512" y="506"/><use href="#m" x="1532" y="506"/><text x="1546" y="511" class="r" textLength="35" lengthAdjust="spacingAndGlyphs">Lrock6</text><use href="#l" x="1610" y="506"/><use href="#d" x="1631" y="506"/><use href="#e" x="1883" y="506"/><use href="#c" x="1903" y="506"/>
<use href="#a" x="1512" y="526"/><use href="#m" x="1532" y="526"/><text x="1546" y="531" class="r" textLength="35" lengthAdjust="spacingAndGlyphs">Lrock7</text><use href="#l" x="1610" y="526"/><use href="#d" x="1631" y="526"/><use href="#e" x="1883" y="526"/><use href="#c" x="1903" y="526"/>
<use href="#a" x="1512" y="546"/><use href="#m" x="1532" y="546"/><text x="1546" y="551" class="r" textLength="35" lengthAdjust="spacingAndGlyphs">Lrock8</text><use href="#l" x="1610" y="546"/><use href="#d" x="1631" y="546"/><use href="#e" x="1883" y="546"/><use href="#c" x="1903" y="546"/>
<use href="#a" x="1512" y="566"/><use href="#m" x="1532" y="566"/><text x="1546" y="571" class="r" textLength="35" lengthAdjust="spacingAndGlyphs">Lrock9</text><use href="#l" x="1610" y="566"/><use href="#d" x="1631" y="566"/><use href="#e" x="1883" y="566"/><use href="#c" x="1903" y="566"/>
<use href="#a" x="1512" y="586"/><use href="#m" x="1532" y="586"/><text x="1546" y="591" class="r" textLength="42" lengthAdjust="spacingAndGlyphs">Lrock10</text><use href="#l" x="1616" y="586"/><use href="#d" x="1638" y="586"/><use href="#e" x="1883" y="586"/><use href="#c" x="1903" y="586"/>
<use href="#a" x="1512" y="606"/><use href="#m" x="1532" y="606"/><text x="1546" y="611" class="r" textLength="42" lengthAdjust="spacingAndGlyphs">Lrock11</text><use href="#l" x="1616" y="606"/><use href="#d" x="1638" y="606"/><use href="#e" x="1883" y="606"/><use href="#c" x="1903" y="606"/>
<use href="#a" x="1512" y="626"/><use href="#m" x="1532" y="626"/><text x="1546" y="631" class="r" textLength="42" lengthAdjust="spacingAndGlyphs">Lrock12</text><use href="#l" x="1616" y="626"/><use href="#d" x="1638" y="626"/><use href="#e" x="1883" y="626"/><use href="#c" x="1903" y="626"/>
<use href="#a" x="1512" y="646"/><use href="#m" x="1532" y="646"/><text x="1546" y="651" class="r" textLength="42" lengthAdjust="spacingAndGlyphs">Lrock13</text><use href="#l" x="1616" y="646"/><use href="#d" x="1638" y="646"/><use href="#e" x="1883" y="646"/><use href="#c" x="1903" y="646"/>
<use href="#a" x="1512" y="666"/><use href="#m" x="1532" y="666"/><text x="1546" y="671" class="r" textLength="42" lengthAdjust="spacingAndGlyphs">Lrock14</text><use href="#l" x="1616" y="666"/><use href="#d" x="1638" y="666"/><use href="#e" x="1883" y="666"/><use href="#c" x="1903" y="666"/>
<use href="#a" x="1512" y="686"/><use href="#m" x="1532" y="686"/><text x="1546" y="691" class="r" textLength="42" lengthAdjust="spacingAndGlyphs">Lrock15</text><use href="#l" x="1616" y="686"/><use href="#d" x="1638" y="686"/><use href="#e" x="1883" y="686"/><use href="#c" x="1903" y="686"/>
<use href="#a" x="1512" y="706"/><use href="#m" x="1532" y="706"/><text x="1546" y="711" class="r" textLength="42" lengthAdjust="spacingAndGlyphs">Lrock16</text><use href="#l" x="1616" y="706"/><use href="#d" x="1638" y="706"/><use href="#e" x="1883" y="706"/><use href="#c" x="1903" y="706"/>
<use href="#a" x="1512" y="726"/><use href="#m" x="1532" y="726"/><text x="1546" y="731" class="r" textLength="42" lengthAdjust="spacingAndGlyphs">Lrock17</text><use href="#l" x="1616" y="726"/><use href="#d" x="1638" y="726"/><use href="#e" x="1883" y="726"/><use href="#c" x="1903" y="726"/>
<use href="#a" x="1512" y="746"/><use href="#m" x="1532" y="746"/><text x="1546" y="751" class="r" textLength="42" lengthAdjust="spacingAndGlyphs">Lrock18</text><use href="#l" x="1616" y="746"/><use href="#d" x="1638" y="746"/><use href="#e" x="1883" y="746"/><use href="#c" x="1903" y="746"/>
<use href="#a" x="1512" y="766"/><use href="#m" x="1532" y="766"/><text x="1546" y="771" class="r" textLength="42" lengthAdjust="spacingAndGlyphs">Lrock19</text><use href="#l" x="1616" y="766"/><use href="#d" x="1638" y="766"/><use href="#e" x="1883" y="766"/><use href="#c" x="1903" y="766"/>
<use href="#a" x="1512" y="786"/><use href="#m" x="1532" y="786"/><text x="1546" y="791" class="r" textLength="42" lengthAdjust="spacingAndGlyphs">Lrock20</text><use href="#l" x="1616" y="786"/><use href="#d" x="1638" y="786"/><use href="#e" x="1883" y="786"/><use href="#c" x="1903" y="786"/>
<use href="#a" x="1512" y="806"/><use href="#m" x="1532" y="806"/><text x="1546" y="811" class="r" textLength="42" lengthAdjust="spacingAndGlyphs">Lrock21</text><use href="#l" x="1616" y="806"/><use href="#d" x="1638" y="806"/><use href="#e" x="1883" y="806"/><use href="#c" x="1903" y="806"/>
<use href="#a" x="1512" y="826"/><use href="#m" x="1532" y="826"/><text x="1546" y="831" class="r" textLength="42" lengthAdjust="spacingAndGlyphs">Lrock22</text><use href="#l" x="1616" y="826"/><use href="#d" x="1638" y="826"/><use href="#e" x="1883" y="826"/><use href="#c" x="1903" y="826"/>
</g>

<!-- PROPERTIES -->
<path d="M1462,866V847q0,-6 6,-6h446q6,0 6,6v19Z" fill="#fff"/>
<rect x="1470" y="843" width="32" height="21" rx="4" fill="#1e1e1e"/><path d="M1476,847h12v6h-12zM1476,855h12v6h-12z" fill="none" stroke="#ddd"/><rect x="1476" y="855" width="7" height="6" fill="#ddd"/><rect x="1481" y="847" width="7" height="6" fill="#ddd"/><use href="#h" x="1496" y="855"/>
<rect x="1636" y="843" width="110" height="21" rx="10" fill="#1a1a1a"/><use href="#p" x="1648" y="852"/>
<rect x="1893" y="843" width="20" height="21" rx="4" fill="#3c3c3c"/><use href="#h" x="1903" y="854"/>
<rect x="1464" y="911" width="26" height="26" rx="4" fill="#2e2e2e"/>
<path d="M1472,878v18M1482,878v6l-2,3v9M1470,878c0,3 4,3 4,0M1480,884h4" stroke="#ccc" stroke-width="2" fill="none"/>
<path d="M1471,918h3v-2h5v2h5v14h-13z" fill="#ddd"/><rect x="1478" y="921" width="4" height="3" fill="#333"/>
<path d="M1470,945h14v5h-14zM1473,950h8v10h-8z" fill="#ccc"/><path d="M1477,953l2,6h-4z" fill="#333"/>
<path d="M1473,972h11v14h-11zM1470,975v14h11" fill="none" stroke="#ccc" stroke-width="1.300"/><path d="M1476,983l3,-6l3,6z" fill="#ccc"/>
<path d="M1473,1000c-4,6 -4,9 0,10c4,-1 4,-4 0,-10z" fill="#ccc"/><circle cx="1481" cy="1012" r="4" fill="none" stroke="#ccc"/><circle cx="1482" cy="1002" r="2" fill="#ccc"/>
<circle cx="1477" cy="1035" r="6" fill="none" stroke="#ccc"/>
<path d="M1505,878c-4,6 -4,9 0,10c4,-1 4,-4 0,-10z" fill="#ddd"/><circle cx="1511" cy="889" r="4" fill="none" stroke="#ddd"/><circle cx="1512" cy="879" r="2" fill="#ddd"/>
<text x="1524" y="889" textLength="31" lengthAdjust="spacingAndGlyphs">Scene</text>
<text x="1587" y="925">Re</text>
<rect x="1499" y="940" width="130" height="25" rx="4" fill="#3d3d3d"/>
<rect x="1499" y="965" width="130" height="85" fill="#1e1e1e"/>
<path d="M1506,951l4,4l4,-4" class="i" stroke-width="1.100"/>
<text x="1520" y="957" textLength="47" lengthAdjust="spacingAndGlyphs">Sampling</text>
<rect x="1499" y="1050" width="421" height="15" fill="#333"/>
<text x="1510" y="1062" style="font-size:11px;fill:#bbb">Multi Object</text>

<!-- TIMELINE -->
<path d="M0,875V852q0,-6 6,-6H1454q6,0 6,6V875Z" fill="#2d2d2d"/>
<rect y="875" width="1460" height="23" fill="#242424"/>
<rect y="898" width="1460" height="134" fill="#000"/>
<rect x="200" y="898" width="1260" height="134" fill="url(#vl)"/>
<rect x="0" y="898" width="1460" height="17" fill="#241312" opacity=".92"/>
<rect x="200" y="898" width="1260" height="17" fill="url(#vl)" opacity=".5"/>
<rect x="0" y="898" width="200" height="134" fill="#2b2b2b"/>
<rect x="200" y="1022" width="1250" height="10" rx="5" fill="#474747"/>
<rect x="784" y="875" width="1.500" height="157" fill="#4a6fb0"/>
<rect x="9" y="851" width="30" height="22" rx="4" class="b"/><path d="M16,856h12v4h-12zM22,862l3,3l-3,3l-3,-3z" fill="none" stroke="#ddd"/><use href="#h" x="33" y="862"/>
<rect x="46" y="851" width="122" height="22" rx="4" class="b"/><path d="M52,856h12v4h-12zM58,862l3,3l-3,3l-3,-3z" fill="none" stroke="#ddd"/><text x="71" y="866" textLength="57" lengthAdjust="spacingAndGlyphs">Dope Sheet</text><use href="#h" x="162" y="862"/>
<text x="181" y="866" textLength="24" lengthAdjust="spacingAndGlyphs">View</text>
<text x="222" y="866" textLength="30" lengthAdjust="spacingAndGlyphs">Select</text>
<text x="267" y="866" textLength="35" lengthAdjust="spacingAndGlyphs">Marker</text>
<text x="317" y="866" textLength="39" lengthAdjust="spacingAndGlyphs">Channel</text>
<text x="372" y="866" textLength="20" lengthAdjust="spacingAndGlyphs">Key</text>
<use href="#p" x="13" y="884"/>
<text x="180" y="891" style="fill:#ddd;font-size:14px">↔</text>
<path d="M4,904h9l-4.500,7z" fill="#999"/>
<text x="20" y="912" style="fill:#ccc" textLength="47" lengthAdjust="spacingAndGlyphs">Summary</text>
<text class="f" x="241" y="891">0</text><text class="f" x="288" y="891">10</text><text class="f" x="335" y="891">20</text><text class="f" x="381" y="891">30</text><text class="f" x="428" y="891">40</text><text class="f" x="475" y="891">50</text><text class="f" x="522" y="891">60</text><text class="f" x="569" y="891">70</text><text class="f" x="615" y="891">80</text><text class="f" x="662" y="891">90</text><text class="f" x="709" y="891">100</text><text class="f" x="756" y="891">110</text><text class="f" x="803" y="891">120</text><text class="f" x="849" y="891">130</text><text class="f" x="896" y="891">140</text><text class="f" x="943" y="891">150</text><text class="f" x="990" y="891">160</text><text class="f" x="1037" y="891">170</text><text class="f" x="1083" y="891">180</text><text class="f" x="1130" y="891">190</text><text class="f" x="1177" y="891">200</text><text class="f" x="1224" y="891">210</text><text class="f" x="1271" y="891">220</text><text class="f" x="1317" y="891">230</text><text class="f" x="1364" y="891">240</text><text class="f" x="1411" y="891">250</text>
<rect x="771" y="877" width="29" height="16" rx="4" fill="#4a6fb0"/><text class="f" x="785.500" y="890" style="fill:#eef">116</text>
<path d="M1458,894l-4,4l4,4" class="i" stroke-width="1"/>
<rect x="1182" y="851" width="21" height="22" rx="10" fill="#1e5aa0"/><path d="M1188,855l0,13l3,-3l5,0z" fill="#eee"/>
<rect x="1204" y="856" width="13" height="13" fill="none" stroke="#ccc" stroke-dasharray="2 1.500"/>
<path d="M1231,854l7,15h-14z" fill="#eee"/><rect x="1230" y="859" width="2" height="6" fill="#333"/>
<rect x="1247" y="851" width="31" height="22" rx="4" class="b"/><path d="M1253,855h12l-5,7v6l-2,-2v-4z" fill="none" stroke="#ddd"/><use href="#h" x="1271" y="863"/>
<rect x="1283" y="851" width="112" height="22" rx="4" class="b"/><text x="1291" y="866" textLength="75" lengthAdjust="spacingAndGlyphs">Nearest Frame</text><use href="#h" x="1389" y="863"/>
<rect x="1402" y="851" width="50" height="22" rx="10" fill="#2e2e2e" stroke="#161616"/><circle cx="1411" cy="862" r="6" fill="none" stroke="#999"/><circle cx="1411" cy="862" r="2" fill="#ccc"/>
<path d="M1424,870c4,0 3,-14 7,-14c4,0 3,14 7,14" fill="none" stroke="#aaa"/>
<rect y="1032" width="1460" height="28" fill="#2a2a2a"/>
<rect y="1060" width="1920" height="20" fill="#1d1d1d"/>
<rect x="1180" y="1039" width="74" height="19" rx="4" fill="#545454"/><text x="1217" y="1053" style="text-anchor:middle">116</text>
<circle cx="1270" cy="1049" r="6" fill="none" stroke="#ddd" stroke-width="1.300"/><path d="M1270,1049v-4M1267,1041h6" stroke="#ddd" stroke-width="1.300"/>
<path d="M1284,1039h83v19h-83q-4,0 -4,-4v-11q0,-4 4,-4z" fill="#545454"/><text x="1295" y="1053" textLength="25" lengthAdjust="spacingAndGlyphs">Start</text><text x="1347" y="1053">1</text>
<path d="M1367,1039h79q4,0 4,4v11q0,4 -4,4h-79z" fill="#545454"/><text x="1384" y="1053">End</text><text x="1417" y="1053">265</text>
<text x="34" y="1074" style="fill:#999" textLength="31" lengthAdjust="spacingAndGlyphs">Select</text>
<text x="98" y="1074" style="fill:#999" textLength="54" lengthAdjust="spacingAndGlyphs">Box Select</text>
<text x="245" y="1074" style="fill:#999" textLength="60" lengthAdjust="spacingAndGlyphs">Rotate View</text>
<text x="456" y="1074" style="fill:#999" textLength="106" lengthAdjust="spacingAndGlyphs">Object Context Menu</text>
<text x="1783" y="1074" style="fill:#999" textLength="127" lengthAdjust="spacingAndGlyphs">VRAM: 0.0/4.0 GiB | 3.0.0</text>

<!-- OVERLAY SWOOSHES -->
<path d="M0,917C60,885 190,848 345,848C560,848 820,925 960,993C1060,1042 1150,1063 1235,1063C1380,1063 1500,1020 1597,957C1690,895 1790,835 1920,760V1080H0Z" fill="#54cdd4" opacity=".93"/>
<path d="M0,998C70,955 200,924 349,924C560,924 800,985 985,1090L1400,1100L1431,1080C1500,1040 1560,1030 1597,1013C1660,985 1730,930 1787,895C1830,868 1880,850 1920,833V1100H0Z" fill="#dcc063" opacity=".95"/>
<path d="M80,1085C120,1055 250,993 416,993C520,993 640,1030 753,1085Z" fill="#c8c8c8" opacity=".95"/>
<path d="M1591,1085C1650,1030 1800,960 1920,913V1085Z" fill="#c8c8c8" opacity=".95"/>

<path d="M1693,840L1788,897L1693,955L1598,897Z" fill="#c8d0d8"/>
<path d="M1598,897L1693,955V1067L1598,1010Z" fill="#3c3c3c"/>
<path d="M1693,955L1788,897V1010L1693,1067Z" fill="#7b8791"/>
<path d="M1831,896L1909,943L1831,988L1754,943Z" fill="#aebdcb"/>
<path d="M1754,943L1831,988V1078L1754,1030Z" fill="#385a72"/>
<path d="M1831,988L1909,943V1030L1831,1078Z" fill="#5a7a94"/>

<text x="12" y="990" class="lib" filter="url(#sh)" style="font-size:68px;font-weight:bold;fill:#0a0a0a;stroke:#0a0a0a;stroke-width:2.500px" textLength="602" lengthAdjust="spacingAndGlyphs">Objects, organized.</text>
<text x="16" y="1057" class="lib" filter="url(#sh)" style="font-size:50px;fill:#0a0a0a" textLength="978" lengthAdjust="spacingAndGlyphs">things have been organized for easy editing.</text>
</svg>
</body></html>
